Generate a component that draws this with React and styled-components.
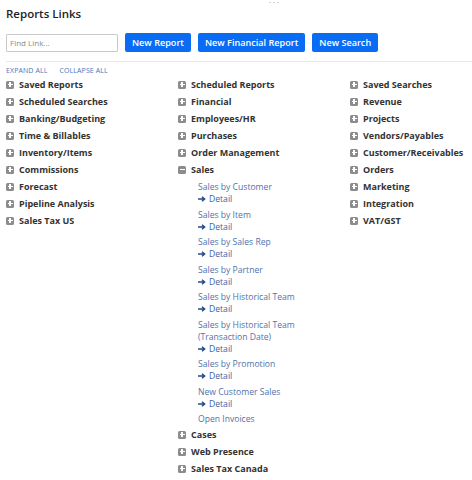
import React from 'react'
import styled, { createGlobalStyle } from 'styled-components'

const GlobalStyle = createGlobalStyle`
  body {
    margin: 0;
    background: #fff;
    font-family: "Open Sans", "Liberation Sans", sans-serif;
    color: #333;
  }
`

const Page = styled.div`
  width: 472px;
  height: 480px;
  padding: 0 6px;
  box-sizing: border-box;
  overflow: hidden;
`

const Grip = styled.div`
  display: flex;
  gap: 2px;
  height: 4px;
  padding: 2px 0 0 263px;
  span {
    width: 2px;
    height: 1px;
    background: #d4d4d4;
  }
`

const Title = styled.h1`
  margin: 1px 0 0;
  font-size: 11.5px;
  font-weight: 600;
  line-height: 14px;
  color: #222;
`

const Toolbar = styled.div`
  display: flex;
  align-items: center;
  gap: 7px;
  margin-top: 12px;
  padding-bottom: 9px;
  border-bottom: 1px solid #e8e8e8;
  margin-right: -6px;
`

const Search = styled.input`
  width: 112px;
  height: 18px;
  box-sizing: border-box;
  border: 1px solid #c9c9c9;
  border-radius: 1px;
  padding: 0 3px;
  font-family: inherit;
  font-size: 8px;
  color: #333;
  &::placeholder { color: #8a8a8a; }
`

const Button = styled.button`
  height: 19px;
  padding: 0 7px;
  border: none;
  border-radius: 2px;
  background: #0a6cf2;
  color: #fff;
  font-family: inherit;
  font-size: 9.1px;
  font-weight: 600;
  line-height: 19px;
  white-space: nowrap;
`

const Actions = styled.div`
  display: flex;
  gap: 12px;
  margin-top: 3px;
  height: 10px;
  align-items: center;
`

const Action = styled.a`
  font-size: 7px;
  color: #4877c2;
  text-transform: uppercase;
  letter-spacing: 0.1px;
`

const Columns = styled.div`
  display: grid;
  grid-template-columns: 172px 172px 1fr;
  margin-top: 1px;
`

const Column = styled.div`
  display: flex;
  flex-direction: column;
`

const Category = styled.div`
  display: flex;
  align-items: center;
  gap: 5px;
  height: 17px;
  font-size: 9px;
  font-weight: 700;
  color: #333;
  white-space: nowrap;
`

const Toggle = styled.span`
  position: relative;
  width: 8px;
  height: 8px;
  border-radius: 1.5px;
  background: #8c8c8c;
  flex: none;
  &::before, &::after {
    content: '';
    position: absolute;
    background: #fff;
  }
  &::before { left: 1.5px; right: 1.5px; top: 3.25px; height: 1.5px; }
  &::after {
    display: ${p => (p.$open ? 'none' : 'block')};
    top: 1.5px; bottom: 1.5px; left: 3.25px; width: 1.5px;
  }
`

const SubList = styled.div`
  display: flex;
  flex-direction: column;
  gap: 3.5px;
  padding: 3px 0 1px 20px;
`

const SubGroup = styled.div`
  display: flex;
  flex-direction: column;
`

const SubLink = styled.a`
  display: block;
  font-size: 8.6px;
  line-height: 12px;
  color: #4f72ac;
`

const Detail = styled.a`
  display: flex;
  align-items: center;
  gap: 3px;
  height: 12px;
  font-size: 8.6px;
  line-height: 12px;
  color: #3d63a6;
  svg { flex: none; }
`

const Arrow = () => (
  <svg width="8" height="6" viewBox="0 0 8 6">
    <path d="M0 3h6M4 0.8L6.6 3L4 5.2" stroke="#27498c" strokeWidth="1.5" fill="none" />
  </svg>
)

const col1 = ['Saved Reports', 'Scheduled Searches', 'Banking/Budgeting', 'Time & Billables', 'Inventory/Items', 'Commissions', 'Forecast', 'Pipeline Analysis', 'Sales Tax US']
const col2a = ['Scheduled Reports', 'Financial', 'Employees/HR', 'Purchases', 'Order Management']
const col2b = ['Cases', 'Web Presence', 'Sales Tax Canada']
const col3 = ['Saved Searches', 'Revenue', 'Projects', 'Vendors/Payables', 'Customer/Receivables', 'Orders', 'Marketing', 'Integration', 'VAT/GST']

const sales = [
  { lines: ['Sales by Customer'], detail: true },
  { lines: ['Sales by Item'], detail: true },
  { lines: ['Sales by Sales Rep'], detail: true },
  { lines: ['Sales by Partner'], detail: true },
  { lines: ['Sales by Historical Team'], detail: true },
  { lines: ['Sales by Historical Team', '(Transaction Date)'], detail: true },
  { lines: ['Sales by Promotion'], detail: true },
  { lines: ['New Customer Sales'], detail: true },
  { lines: ['Open Invoices'], detail: false },
]

const Item = ({ name, open }) => (
  <Category>
    <Toggle $open={open} />
    {name}
  </Category>
)

export default function App() {
  return (
    <Page>
      <GlobalStyle />
      <Grip><span /><span /><span /></Grip>
      <Title>Reports Links</Title>
      <Toolbar>
        <Search placeholder="Find Link..." />
        <Button>New Report</Button>
        <Button>New Financial Report</Button>
        <Button>New Search</Button>
      </Toolbar>
      <Actions>
        <Action>Expand All</Action>
        <Action>Collapse All</Action>
      </Actions>
      <Columns>
        <Column>
          {col1.map(n => <Item key={n} name={n} />)}
        </Column>
        <Column>
          {col2a.map(n => <Item key={n} name={n} />)}
          <Item name="Sales" open />
          <SubList>
            {sales.map((s, i) => (
              <SubGroup key={i}>
                {s.lines.map((l, j) => <SubLink key={j}>{l}</SubLink>)}
                {s.detail && <Detail><Arrow />Detail</Detail>}
              </SubGroup>
            ))}
          </SubList>
          {col2b.map(n => <Item key={n} name={n} />)}
        </Column>
        <Column>
          {col3.map(n => <Item key={n} name={n} />)}
        </Column>
      </Columns>
    </Page>
  )
}
